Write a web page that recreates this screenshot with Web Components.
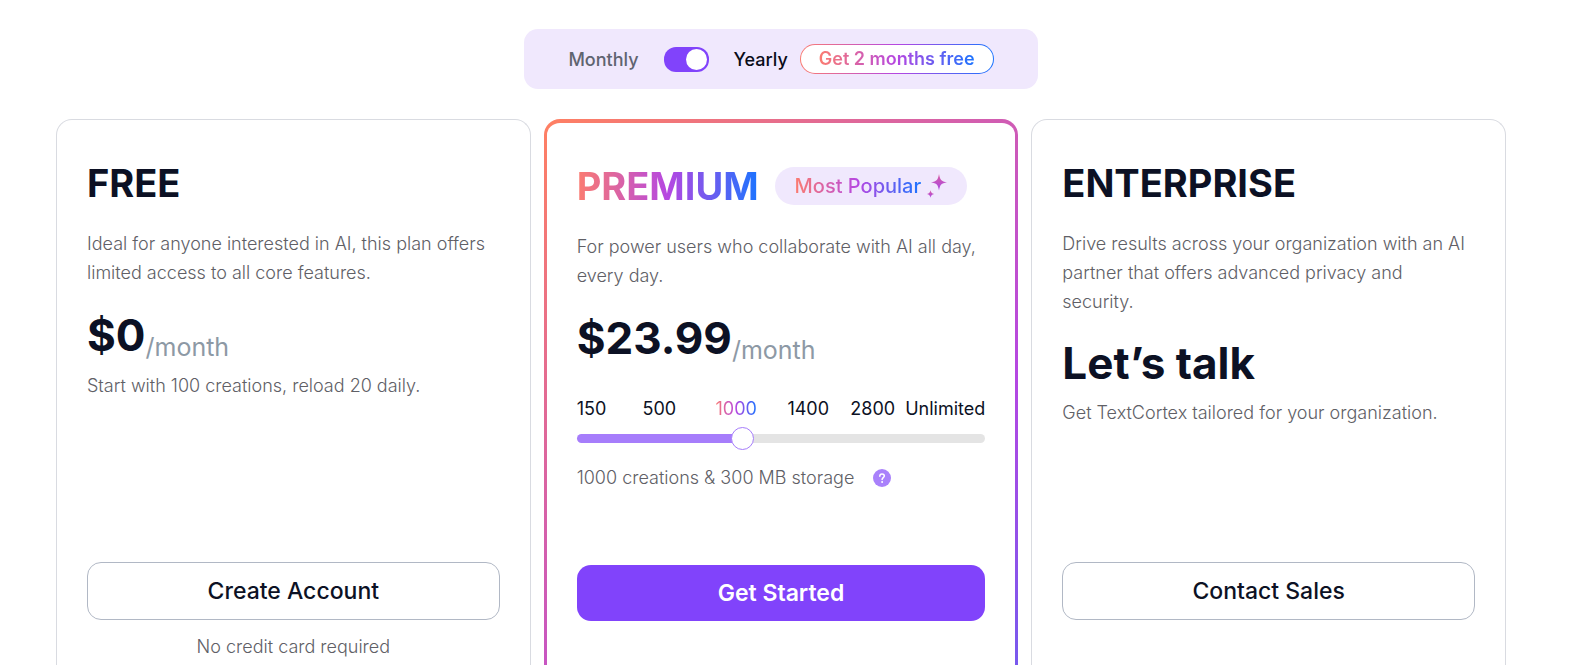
<!DOCTYPE html>
<html lang="en">
<head>
<meta charset="utf-8">
<meta name="viewport" content="width=device-width, initial-scale=1">
<title>Pricing</title>
<style>
  :root {
    --ink: #0c1124;
    --muted: #606066;
    --violet: #8143fb;
    --violet-light: #a67dfb;
    --lilac: #f0e8fd;
    --rainbow: linear-gradient(90deg, #fb7c70, #b547e2 50%, #1b74ff);
  }
  body {
    margin: 0;
    background: #fff;
    color: var(--ink);
    font-family: Inter, "Liberation Sans", sans-serif;
    font-size: 18px;
    line-height: 29px;
  }
</style>
</head>
<body>
<pricing-page>
  <billing-toggle slot="toggle"></billing-toggle>

  <plan-card>
    <plan-title slot="title">FREE</plan-title>
    <span slot="description">Ideal for anyone interested in AI, this plan offers limited access to all core features.</span>
    <plan-price slot="price" per="/month">$0</plan-price>
    <span slot="details">Start with 100 creations, reload 20 daily.</span>
    <plan-button slot="action">Create Account</plan-button>
    <span slot="footnote">No credit card required</span>
  </plan-card>

  <plan-card featured>
    <plan-title slot="title" rainbow>PREMIUM</plan-title>
    <popular-badge slot="title">Most Popular</popular-badge>
    <span slot="description">For power users who collaborate with AI all day, every day.</span>
    <plan-price slot="price" per="/month">$23.99</plan-price>
    <creation-slider slot="details" value="2"></creation-slider>
    <plan-button slot="action" primary>Get Started</plan-button>
  </plan-card>

  <plan-card>
    <plan-title slot="title">ENTERPRISE</plan-title>
    <span slot="description">Drive results across your organization with an AI partner that offers advanced privacy and security.</span>
    <plan-price slot="price">Let’s talk</plan-price>
    <span slot="details">Get TextCortex tailored for your organization.</span>
    <plan-button slot="action">Contact Sales</plan-button>
  </plan-card>
</pricing-page>

<script>
class PricingPage extends HTMLElement {
  constructor() {
    super();
    this.attachShadow({mode: 'open'});
    this.shadowRoot.innerHTML = `
    <style>
      :host {
        display: flex;
        flex-direction: column;
        gap: 30px;
        box-sizing: border-box;
        min-height: 100vh;
        padding: 29px 66px 0 56px;
      }
      header {
        display: flex;
        justify-content: center;
      }
      main {
        flex: 1;
        display: grid;
        grid-template-columns: repeat(3, minmax(0, 1fr));
        gap: 13px;
      }
    </style>
    <header><slot name="toggle"></slot></header>
    <main><slot></slot></main>
    `;
  }
}

class BillingToggle extends HTMLElement {
  constructor() {
    super();
    this.attachShadow({mode: 'open'});
    this.shadowRoot.innerHTML = `
    <style>
      :host {
        display: flex;
        align-items: center;
        box-sizing: border-box;
        height: 60px;
        padding: 0 44px;
        border-radius: 14px;
        background: var(--lilac);
        font-weight: 500;
      }
      label {
        display: flex;
        align-items: center;
        gap: 25px;
      }
      .monthly { color: #5f6470; }
      .yearly { color: #090c18; }
      input {
        appearance: none;
        display: flex;
        justify-content: flex-start;
        box-sizing: border-box;
        width: 45px;
        height: 25px;
        margin: 0;
        padding: 2px;
        border-radius: 12px;
        background: #a3a6b0;
        cursor: pointer;
      }
      input::before {
        content: "";
        width: 21px;
        height: 21px;
        border-radius: 50%;
        background: #fff;
      }
      input:checked {
        justify-content: flex-end;
        background: var(--violet);
      }
      .offer {
        box-sizing: border-box;
        height: 30px;
        margin-left: 12px;
        padding: 0 18px;
        border: 1px solid transparent;
        border-radius: 15px;
        background: linear-gradient(#fff, #fff) padding-box, var(--rainbow) border-box;
        font-weight: 600;
        line-height: 28px;
      }
      .offer span {
        background: var(--rainbow);
        background-clip: text;
        -webkit-background-clip: text;
        color: transparent;
      }
    </style>
    <label>
      <span class="monthly">Monthly</span>
      <input type="checkbox" role="switch" checked>
      <span class="yearly">Yearly</span>
    </label>
    <div class="offer"><span>Get 2 months free</span></div>
    `;
  }
}

class PlanCard extends HTMLElement {
  constructor() {
    super();
    this.attachShadow({mode: 'open'});
    this.shadowRoot.innerHTML = `
    <style>
      :host {
        display: flex;
        flex-direction: column;
        box-sizing: border-box;
        padding: 40px 30px 0;
        border: 1px solid #d9dbe1;
        border-bottom: 0;
        border-radius: 16px 16px 0 0;
      }
      :host([featured]) {
        border: 3px solid transparent;
        border-width: 4px 3px 0;
        background:
          linear-gradient(#fff, #fff) padding-box,
          linear-gradient(135deg, #ff8062, #b547e2 516px, #1b74ff 1032px) border-box;
      }
      .info { min-height: 402px; }
      .title {
        display: flex;
        align-items: center;
        gap: 16px;
      }
      .description {
        margin: 23px 0 20px;
        color: var(--muted);
        font-weight: 300;
      }
      .details {
        margin-top: 8px;
        color: var(--muted);
        font-weight: 300;
      }
      .footnote {
        margin-top: 12px;
        color: var(--muted);
        font-weight: 300;
        text-align: center;
      }
    </style>
    <div class="info">
      <div class="title"><slot name="title"></slot></div>
      <p class="description"><slot name="description"></slot></p>
      <slot name="price"></slot>
      <div class="details"><slot name="details"></slot></div>
    </div>
    <slot name="action"></slot>
    <div class="footnote"><slot name="footnote"></slot></div>
    `;
  }
}

class PlanTitle extends HTMLElement {
  constructor() {
    super();
    this.attachShadow({mode: 'open'});
    this.shadowRoot.innerHTML = `
    <style>
      :host { display: block; }
      h2 {
        margin: 0;
        font-size: 38px;
        font-weight: 700;
        line-height: 46px;
      }
      :host([rainbow]) h2 {
        background: var(--rainbow);
        background-clip: text;
        -webkit-background-clip: text;
        color: transparent;
      }
    </style>
    <h2><slot></slot></h2>
    `;
  }
}

class PopularBadge extends HTMLElement {
  constructor() {
    super();
    this.attachShadow({mode: 'open'});
    this.shadowRoot.innerHTML = `
    <style>
      :host {
        display: flex;
        align-items: center;
        gap: 6px;
        height: 38px;
        padding: 0 20px;
        border-radius: 19px;
        background: var(--lilac);
        font-size: 20px;
        font-weight: 500;
        white-space: nowrap;
      }
      span {
        background: var(--rainbow);
        background-clip: text;
        -webkit-background-clip: text;
        color: transparent;
      }
    </style>
    <span><slot></slot></span>
    <svg width="20" height="24" viewBox="0 0 20 24" aria-hidden="true">
      <defs>
        <linearGradient id="spark" x1="0" y1="0" x2="0" y2="1">
          <stop offset="0" stop-color="#d85b9f"/>
          <stop offset="1" stop-color="#a948ea"/>
        </linearGradient>
      </defs>
      <path fill="url(#spark)" d="M12 0C13 5.800 14.200 7.300 20 8.300C14.200 9.300 13 10.800 12 16.500C11 10.800 9.800 9.300 4 8.300C9.800 7.300 11 5.800 12 0Z"/>
      <path fill="url(#spark)" d="M3.500 16.300C4.100 18.800 4.700 19.400 7.200 20C4.700 20.600 4.100 21.200 3.500 23.700C2.900 21.200 2.300 20.600 -0.200 20C2.300 19.400 2.900 18.800 3.500 16.300Z"/>
    </svg>
    `;
  }
}

class PlanPrice extends HTMLElement {
  constructor() {
    super();
    this.attachShadow({mode: 'open'});
  }

  connectedCallback() {
    this.shadowRoot.innerHTML = `
    <style>
      :host {
        display: flex;
        align-items: flex-end;
        white-space: nowrap;
      }
      strong {
        font-size: 44px;
        font-weight: 700;
        line-height: 54px;
      }
      :host([per]) strong { line-height: 56px; }
      span {
        color: #8d99a5;
        font-size: 25px;
        line-height: 32px;
      }
    </style>
    <strong><slot></slot></strong>
    ${this.hasAttribute('per') ? `<span>${this.getAttribute('per')}</span>` : ''}
    `;
  }
}

const tiers = [
  {label: '150', storage: '50 MB'},
  {label: '500', storage: '150 MB'},
  {label: '1000', storage: '300 MB'},
  {label: '1400', storage: '500 MB'},
  {label: '2800', storage: '1 GB'},
  {label: 'Unlimited', storage: '5 GB'}
];

class CreationSlider extends HTMLElement {
  constructor() {
    super();
    this.attachShadow({mode: 'open'});
  }

  connectedCallback() {
    this.shadowRoot.innerHTML = `
    <style>
      :host {
        display: block;
        padding-top: 20px;
      }
      .ticks {
        display: grid;
        grid-template-columns: 66fr 73fr 72fr 63fr 55fr 79fr;
        color: var(--ink);
        font-weight: 400;
      }
      .ticks .active {
        background: var(--rainbow);
        background-clip: text;
        -webkit-background-clip: text;
        color: transparent;
      }
      .ticks span { justify-self: start; }
      .ticks span:last-child { justify-self: end; }
      input {
        appearance: none;
        display: block;
        width: 100%;
        height: 23px;
        margin: 4px 0 13px;
        background: none;
        cursor: pointer;
      }
      input::-webkit-slider-runnable-track {
        height: 9px;
        border-radius: 5px;
        background: linear-gradient(90deg, var(--violet-light) var(--fill), #e4e4e4 var(--fill));
      }
      input::-webkit-slider-thumb {
        appearance: none;
        box-sizing: border-box;
        width: 23px;
        height: 23px;
        margin-top: -7px;
        border: 1px solid var(--violet-light);
        border-radius: 50%;
        background: #fff;
      }
      .summary {
        display: flex;
        align-items: center;
        gap: 19px;
      }
      button {
        display: flex;
        margin: 0;
        padding: 0;
        border: 0;
        background: none;
        cursor: pointer;
      }
    </style>
    <div class="ticks">${tiers.map(tier => `<span>${tier.label}</span>`).join('')}</div>
    <input type="range" min="0" max="5" step="1" value="${this.getAttribute('value')}" aria-label="Creations per month">
    <div class="summary">
      <span class="text"></span>
      <button type="button" aria-label="About creations">
        <svg width="18" height="18" viewBox="0 0 18 18" aria-hidden="true">
          <circle cx="9" cy="9" r="9" fill="#a981fb"/>
          <path d="M6.800 7.200C6.800 5.800 7.700 5 9 5C10.300 5 11.300 5.800 11.300 7C11.300 8.600 9.100 8.700 9.100 10.500" fill="none" stroke="#fff" stroke-width="1.500" stroke-linecap="round"/>
          <circle cx="9.100" cy="13" r="1" fill="#fff"/>
        </svg>
      </button>
    </div>
    `;
    this.input = this.shadowRoot.querySelector('input');
    this.input.addEventListener('input', () => this.update());
    this.update();
  }

  update() {
    const index = Number(this.input.value);
    const tier = tiers[index];
    this.input.style.setProperty('--fill', `${index * 20}%`);
    this.shadowRoot.querySelectorAll('.ticks span').forEach((tick, i) => tick.classList.toggle('active', i === index));
    this.shadowRoot.querySelector('.text').textContent = `${tier.label} creations & ${tier.storage} storage`;
  }
}

class PlanButton extends HTMLElement {
  constructor() {
    super();
    this.attachShadow({mode: 'open'});
    this.shadowRoot.innerHTML = `
    <style>
      :host { display: block; }
      button {
        display: block;
        width: 100%;
        padding: 12px 16px;
        border: 1px solid #b1b8c5;
        border-radius: 14px;
        background: #fff;
        color: var(--ink);
        font: inherit;
        font-size: 23px;
        font-weight: 500;
        line-height: 32px;
        cursor: pointer;
      }
      :host([primary]) button {
        border: 0;
        background: var(--violet);
        color: #fff;
        font-weight: 600;
      }
    </style>
    <button type="button"><slot></slot></button>
    `;
  }
}

customElements.define('pricing-page', PricingPage);
customElements.define('billing-toggle', BillingToggle);
customElements.define('plan-card', PlanCard);
customElements.define('plan-title', PlanTitle);
customElements.define('popular-badge', PopularBadge);
customElements.define('plan-price', PlanPrice);
customElements.define('creation-slider', CreationSlider);
customElements.define('plan-button', PlanButton);
</script>
</body>
</html>
